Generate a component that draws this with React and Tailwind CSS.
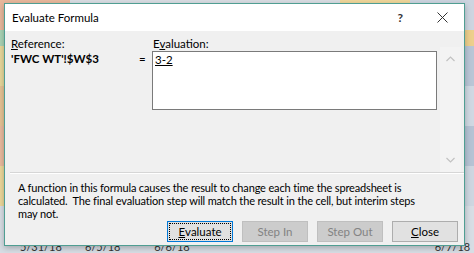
import React from "react";

const font = { fontFamily: 'Lato, "Noto Sans", sans-serif' };

function Btn({ children, primary, disabled }) {
  return (
    <div
      className={
        "w-[66px] h-[21px] flex items-center justify-center text-[11.5px] " +
        (primary
          ? "border border-[#0078d7] bg-[#e1e1e1] text-black"
          : disabled
          ? "border border-[#bfbfbf] bg-[#cccccc] text-[#838383]"
          : "border border-[#adadad] bg-[#e1e1e1] text-black")
      }
    >
      {primary ? (
        <div className="w-[62px] h-[17px] border border-dotted border-black flex items-center justify-center">
          {children}
        </div>
      ) : (
        children
      )}
    </div>
  );
}

export default function App() {
  return (
    <div className="relative w-[474px] h-[253px] overflow-hidden bg-[#e8ecf0]" style={font}>
      {/* background spreadsheet */}
      <div className="absolute inset-0 flex flex-col">
        <div className="flex h-[30px]">
          <div className="w-[70px] bg-[#e8b89c]" />
          <div className="w-[270px] bg-[#d9dde3]" />
          <div className="w-[70px] bg-[#f0d79a]" />
          <div className="flex-1 bg-[#cdd5e0]" />
        </div>
        <div className="flex h-[16px]">
          <div className="w-[10px] bg-[#a9d3b5]" />
          <div className="flex-1" />
          <div className="w-[10px] bg-[#edcf8c]" />
        </div>
        <div className="flex h-[40px]">
          <div className="w-[10px] bg-[#e7d79a]" />
          <div className="flex-1" />
          <div className="w-[10px] bg-[#b9c6d6]" />
        </div>
        <div className="flex h-[40px]">
          <div className="w-[10px] bg-[#e6c394]" />
          <div className="flex-1" />
          <div className="w-[10px] bg-[#cfd8e2]" />
        </div>
        <div className="flex h-[40px]">
          <div className="w-[10px] bg-[#e9ba9e]" />
          <div className="flex-1" />
          <div className="w-[10px] bg-[#b5c3d4]" />
        </div>
        <div className="flex h-[40px]">
          <div className="w-[10px] bg-[#ecd79a]" />
          <div className="flex-1" />
          <div className="w-[10px] bg-[#cdd6e0]" />
        </div>
        <div className="flex flex-1 bg-[#d7dde4] text-[11px] text-[#333] items-end leading-[12px]">
          <div className="w-[60px] pl-[20px]">5/31/18</div>
          <div className="w-[70px] pl-[25px]">6/5/18</div>
          <div className="w-[90px] pl-[25px]">6/6/18</div>
          <div className="w-[200px]" />
          <div className="w-[60px] pl-[20px]">6/7/18</div>
        </div>
      </div>

      {/* dialog */}
      <div className="absolute left-[4px] top-[3px] w-[461px] h-[243px] border border-[#4f9e92] bg-[#f0f0f0] flex flex-col shadow-[0_2px_6px_rgba(0,0,0,0.25)]">
        <div className="h-[27px] shrink-0 bg-white flex items-center pl-[7px] text-[11.5px] text-black">
          <span>Evaluate Formula</span>
          <span className="ml-auto mr-[34px] text-[12px] font-bold text-[#333]">?</span>
          <svg width="11" height="11" viewBox="0 0 11 11" className="mr-[16px]">
            <path d="M0.5 0.5 L10.5 10.5 M10.5 0.5 L0.5 10.5" stroke="#333" strokeWidth="1" />
          </svg>
        </div>

        <div className="flex h-[141px] shrink-0 text-[11.5px]">
          <div className="w-[134px] pl-[6px] pt-[6px] leading-[14px]">
            <div><span className="underline">R</span>eference:</div>
            <div className="font-bold mt-[1px]">'FWC WT'!$W$3</div>
          </div>
          <div className="w-[13px] pt-[21px] leading-[14px]">=</div>
          <div className="w-[285px] pt-[6px] flex flex-col">
            <div className="leading-[14px] pl-[1px]">
              E<span className="underline">v</span>aluation:
            </div>
            <div className="h-[59px] border border-[#7a7a7a] bg-white leading-[14px] pl-[2px] pt-[1px]">
              <span className="underline">3-2</span>
            </div>
          </div>
          <div className="ml-[3px] w-[21px] bg-[#f3f3f3] mt-[16px] flex flex-col items-center justify-between py-[9px]">
            <svg width="9" height="6" viewBox="0 0 9 6">
              <path d="M0.5 5 L4.5 1 L8.5 5" stroke="#c2c2c2" fill="none" strokeWidth="1.2" />
            </svg>
            <svg width="9" height="6" viewBox="0 0 9 6">
              <path d="M0.5 1 L4.5 5 L8.5 1" stroke="#c2c2c2" fill="none" strokeWidth="1.2" />
            </svg>
          </div>
        </div>

        <div className="ml-[5px] h-[2px] shrink-0 border-t border-[#d6d6d6] border-b border-b-white" />

        <div className="h-[40px] shrink-0 pl-[13px] pr-[4px] pt-[7px] text-[11px] leading-[13px] tracking-[-0.15px] text-black whitespace-nowrap">
          <div>A function in this formula causes the result to change each time the spreadsheet is</div>
          <div>calculated.&nbsp; The final evaluation step will match the result in the cell, but interim steps</div>
          <div>may not.</div>
        </div>

        <div className="mt-auto mb-[3px] flex justify-end gap-[9px] pr-[6px]">
          <Btn primary>
            <span className="underline">E</span>valuate
          </Btn>
          <Btn disabled>Step In</Btn>
          <Btn disabled>Step Out</Btn>
          <Btn>
            <span className="underline">C</span>lose
          </Btn>
        </div>
      </div>
    </div>
  );
}
